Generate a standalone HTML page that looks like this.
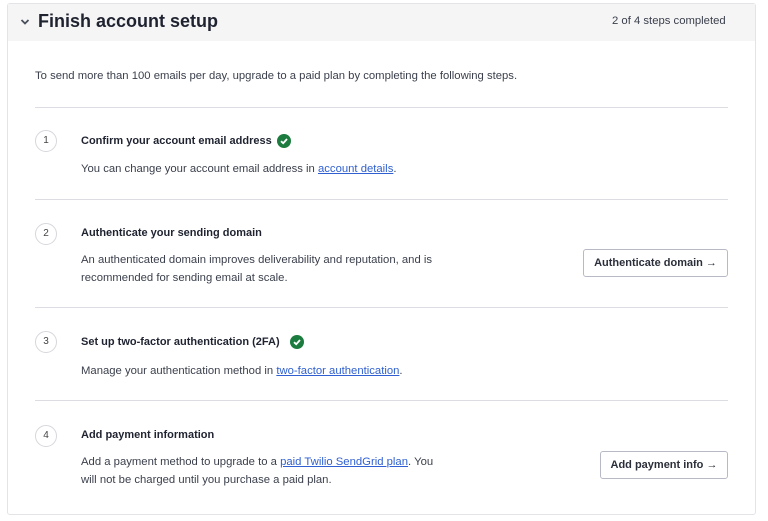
<!DOCTYPE html>
<html><head><style>
*{margin:0;padding:0;box-sizing:border-box}
body{width:768px;height:521px;background:#fff;font-family:"Liberation Sans",Arial,sans-serif;color:#2b2f3a;position:relative;overflow:hidden}
.card{position:absolute;left:7px;top:3px;width:749px;height:512px;border:1px solid #e3e4e8;border-radius:3px;background:#fff}
.hdr{position:absolute;left:0;top:0;right:0;height:37px;background:#f5f5f6}
.a{position:absolute;white-space:nowrap}
.t{font-size:11px;font-weight:bold;color:#1f2330}
.d{font-size:11.3px;color:#3a3f4b;line-height:18px}
.hr{position:absolute;left:35px;width:693px;height:1px;background:#dcdde2}
.c{position:absolute;width:22px;height:22px;border:1px solid #d6d7dc;border-radius:50%;font-size:10px;text-align:center;line-height:20px;color:#444}
.ck{position:absolute;width:14px;height:14px;border-radius:50%;background:#1c7b3e}
a{color:#2f5fd0;text-decoration:underline}
.btn{position:absolute;height:28px;border:1px solid #b7bac4;border-radius:3px;font-size:11px;font-weight:bold;color:#2b2f3a;line-height:26px;text-align:center;background:#fff}
</style></head><body>
<div class="card"><div class="hdr"></div></div>
<svg class="a" style="left:20px;top:18px" width="10" height="8" viewBox="0 0 10 8"><path d="M1.5 2 L5 5.5 L8.5 2" stroke="#4a4f5c" stroke-width="1.8" fill="none"/></svg>
<div class="a" style="left:38px;top:11px;font-size:18px;font-weight:bold;color:#1f2330">Finish account setup</div>
<div class="a" style="left:612px;top:15px;font-size:11.3px;color:#3a3f4b">2 of 4 steps completed</div>
<div class="a d" style="left:35px;top:67px">To send more than 100 emails per day, upgrade to a paid plan by completing the following steps.</div>
<div class="hr" style="top:107px"></div>
<div class="c" style="left:35px;top:130px">1</div>
<div class="a t" style="left:81px;top:135px">Confirm your account email address</div>
<div class="ck" style="left:277px;top:134px"><svg width="14" height="14"><path d="M4 7.2 L6.2 9.2 L10 5" stroke="#fff" stroke-width="1.8" fill="none"/></svg></div>
<div class="a d" style="left:81px;top:160px">You can change your account email address in <a>account details</a>.</div>
<div class="hr" style="top:199px"></div>
<div class="c" style="left:35px;top:223px">2</div>
<div class="a t" style="left:81px;top:227px">Authenticate your sending domain</div>
<div class="a d" style="left:81px;top:251px">An authenticated domain improves deliverability and reputation, and is<br>recommended for sending email at scale.</div>
<div class="btn" style="left:583px;top:249px;width:145px">Authenticate domain →</div>
<div class="hr" style="top:307px"></div>
<div class="c" style="left:35px;top:331px">3</div>
<div class="a t" style="left:81px;top:336px">Set up two-factor authentication (2FA)</div>
<div class="ck" style="left:290px;top:335px"><svg width="14" height="14"><path d="M4 7.2 L6.2 9.2 L10 5" stroke="#fff" stroke-width="1.8" fill="none"/></svg></div>
<div class="a d" style="left:81px;top:362px">Manage your authentication method in <a>two-factor authentication</a>.</div>
<div class="hr" style="top:400px"></div>
<div class="c" style="left:35px;top:425px">4</div>
<div class="a t" style="left:81px;top:429px">Add payment information</div>
<div class="a d" style="left:81px;top:453px">Add a payment method to upgrade to a <a>paid Twilio SendGrid plan</a>. You<br>will not be charged until you purchase a paid plan.</div>
<div class="btn" style="left:600px;top:451px;width:128px">Add payment info →</div>
</body></html>
